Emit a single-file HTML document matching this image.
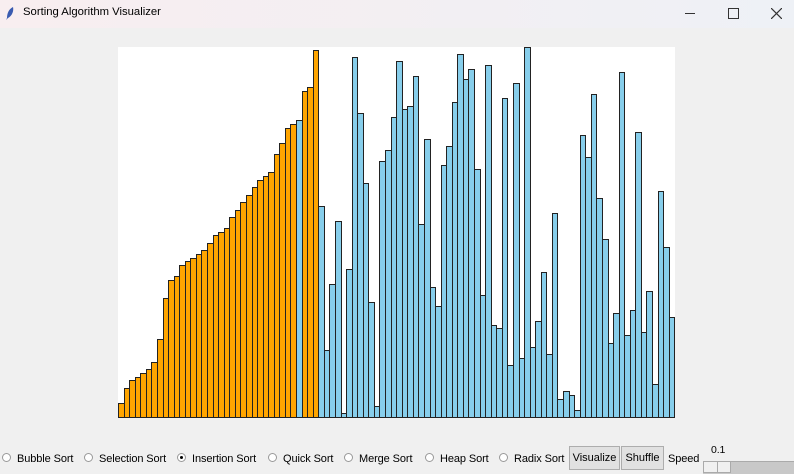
<!DOCTYPE html>
<html><head><meta charset="utf-8"><style>
*{margin:0;padding:0}
body{width:794px;height:471px;background:#f0f0f0;position:relative;overflow:hidden;font-family:"Liberation Sans",sans-serif;font-size:11px;color:#000}
.tb{position:absolute;left:0;top:0;width:794px;height:28px;background:linear-gradient(90deg,#f8eef0,#f2eff3 60%,#eef1f6)}
.ttl{position:absolute;left:23px;top:6px;font-size:11.3px}
.cv{position:absolute;left:118px;top:47px;width:557px;height:371px;background:#fff}
.bars{position:absolute;left:118px;top:0;height:418px;display:flex;align-items:flex-end}
.bars div{width:6.57px;margin-right:-1px;border:1px solid #222;box-sizing:border-box;background:#87ceeb;flex:none}
.bars div.o{background:#ffa500}
.r{position:absolute;top:453px;white-space:nowrap;letter-spacing:-0.1px}
.rd{position:absolute;top:453px;width:9px;height:9px;border-radius:50%;border:1px solid #999;background:#fff;box-sizing:border-box}
.btn{position:absolute;top:446px;height:24px;border:1px solid #adadad;background:#e1e1e1;box-sizing:border-box;text-align:center;line-height:22px}
</style></head><body>
<div class="tb"></div>
<svg style="position:absolute;left:5px;top:6px" width="10" height="15" viewBox="0 0 10 15"><path d="M8 1 C4 3 2 7 2 12 L1 14 L3 12 C7 10 9 5 8 1Z" fill="#3a5bb0"/></svg>
<div class="ttl">Sorting Algorithm Visualizer</div>
<div style="position:absolute;left:685px;top:13px;width:10px;height:1px;background:#333"></div>
<div style="position:absolute;left:728px;top:8px;width:9px;height:9px;border:1px solid #333"></div>
<svg style="position:absolute;left:771px;top:8px" width="11" height="11"><path d="M0 0L11 11M11 0L0 11" stroke="#333" stroke-width="1.2"/></svg>
<div class="cv"></div>
<div class="bars">
<div class="o" style="height:15px"></div><div class="o" style="height:30px"></div><div class="o" style="height:38px"></div><div class="o" style="height:41px"></div><div class="o" style="height:45px"></div><div class="o" style="height:49px"></div><div class="o" style="height:56px"></div><div class="o" style="height:79px"></div><div class="o" style="height:120px"></div><div class="o" style="height:138px"></div>
<div class="o" style="height:142px"></div><div class="o" style="height:153px"></div><div class="o" style="height:157px"></div><div class="o" style="height:160px"></div><div class="o" style="height:164px"></div><div class="o" style="height:168px"></div><div class="o" style="height:175px"></div><div class="o" style="height:183px"></div><div class="o" style="height:186px"></div><div class="o" style="height:190px"></div>
<div class="o" style="height:201px"></div><div class="o" style="height:208px"></div><div class="o" style="height:216px"></div><div class="o" style="height:223px"></div><div class="o" style="height:231px"></div><div class="o" style="height:238px"></div><div class="o" style="height:242px"></div><div class="o" style="height:246px"></div><div class="o" style="height:264px"></div><div class="o" style="height:275px"></div>
<div class="o" style="height:290px"></div><div class="o" style="height:294px"></div><div style="height:298px"></div><div class="o" style="height:327px"></div><div class="o" style="height:331px"></div><div class="o" style="height:368px"></div><div style="height:212px"></div><div style="height:68px"></div><div style="height:134px"></div><div style="height:197px"></div>
<div style="height:5px"></div><div style="height:149px"></div><div style="height:361px"></div><div style="height:305px"></div><div style="height:235px"></div><div style="height:116px"></div><div style="height:12px"></div><div style="height:257px"></div><div style="height:268px"></div><div style="height:301px"></div>
<div style="height:357px"></div><div style="height:309px"></div><div style="height:312px"></div><div style="height:342px"></div><div style="height:194px"></div><div style="height:279px"></div><div style="height:131px"></div><div style="height:112px"></div><div style="height:253px"></div><div style="height:272px"></div>
<div style="height:316px"></div><div style="height:364px"></div><div style="height:339px"></div><div style="height:349px"></div><div style="height:249px"></div><div style="height:123px"></div><div style="height:353px"></div><div style="height:93px"></div><div style="height:90px"></div><div style="height:320px"></div>
<div style="height:53px"></div><div style="height:335px"></div><div style="height:60px"></div><div style="height:371px"></div><div style="height:71px"></div><div style="height:97px"></div><div style="height:146px"></div><div style="height:64px"></div><div style="height:205px"></div><div style="height:19px"></div>
<div style="height:27px"></div><div style="height:23px"></div><div style="height:8px"></div><div style="height:283px"></div><div style="height:261px"></div><div style="height:324px"></div><div style="height:220px"></div><div style="height:179px"></div><div style="height:75px"></div><div style="height:105px"></div>
<div style="height:346px"></div><div style="height:83px"></div><div style="height:108px"></div><div style="height:286px"></div><div style="height:86px"></div><div style="height:127px"></div><div style="height:34px"></div><div style="height:227px"></div><div style="height:171px"></div><div style="height:101px"></div>
</div>
<div class="rd" style="left:2px"></div><div class="r" style="left:17px">Bubble Sort</div>
<div class="rd" style="left:84px"></div><div class="r" style="left:99px">Selection Sort</div>
<div class="rd" style="left:177px"></div><div style="position:absolute;left:180px;top:456px;width:3px;height:3px;border-radius:50%;background:#000"></div><div class="r" style="left:192px">Insertion Sort</div>
<div class="rd" style="left:268px"></div><div class="r" style="left:283px">Quick Sort</div>
<div class="rd" style="left:344px"></div><div class="r" style="left:359px">Merge Sort</div>
<div class="rd" style="left:425px"></div><div class="r" style="left:440px">Heap Sort</div>
<div class="rd" style="left:499px"></div><div class="r" style="left:514px">Radix Sort</div>
<div class="btn" style="left:569px;width:51px">Visualize</div>
<div class="btn" style="left:621px;width:43px">Shuffle</div>
<div class="r" style="left:668px">Speed</div>
<div class="r" style="left:711px;top:444px;font-size:10.5px">0.1</div>
<div style="position:absolute;left:703px;top:461px;width:91px;height:12px;background:#c8c8c8;border-top:1px solid #aaa"></div>
<div style="position:absolute;left:703px;top:461px;width:28px;height:12px;background:#f0f0f0;border:1px solid #aaa;box-sizing:border-box"></div>
<div style="position:absolute;left:717px;top:462px;width:1px;height:10px;background:#aaa"></div>
</body></html>
